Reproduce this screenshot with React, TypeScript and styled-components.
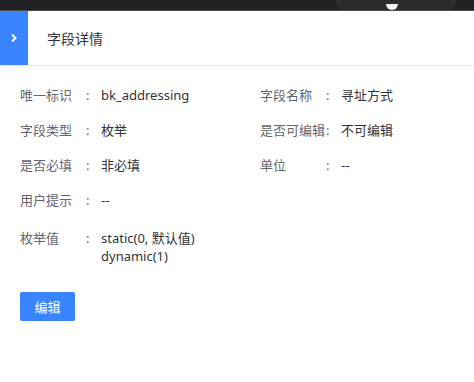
import React from 'react';
import styled, { createGlobalStyle } from 'styled-components';

const GlobalStyle = createGlobalStyle`
  html, body {
    margin: 0;
    padding: 0;
    background: #ffffff;
  }
  body {
    font-family: 'Noto Sans', 'Noto Sans CJK SC', sans-serif;
  }
`;

const Page = styled.div`
  width: 474px;
  height: 382px;
  display: flex;
  flex-direction: column;
  overflow: hidden;
  background: #fff;
`;

const TopStrip = styled.div`
  height: 10px;
  background: #202124;
  border-bottom: 1px solid #4a4b4f;
  display: flex;
  justify-content: flex-end;
  align-items: flex-end;
  padding-right: 18px;
`;

const Pill = styled.div`
  width: 120px;
  height: 10px;
  background: #2b2c30;
  border-radius: 0 0 6px 6px;
  display: flex;
  justify-content: center;
  align-items: flex-end;
  padding-right: 8px;
  box-sizing: border-box;
`;

const Dot = styled.div`
  width: 12px;
  height: 6px;
  border-radius: 0 0 6px 6px;
  background: #f2f2f2;
`;

const Header = styled.div`
  height: 54px;
  display: flex;
  align-items: center;
  border-bottom: 1px solid #e6e7eb;
`;

const Toggle = styled.div`
  width: 28px;
  height: 100%;
  background: #3a84ff;
  display: flex;
  align-items: center;
  justify-content: center;
`;

const Title = styled.div`
  margin-left: 19px;
  font-size: 14px;
  color: #313238;
`;

const Body = styled.div`
  padding: 20px 0 0 20px;
`;

const Grid = styled.div`
  display: grid;
  grid-template-columns: 240px 214px;
  row-gap: 17px;
`;

const Item = styled.div<{ $span?: boolean; $gap?: number }>`
  display: flex;
  font-size: 13px;
  line-height: 18px;
  grid-column: ${p => (p.$span ? '1 / span 2' : 'auto')};
  margin-top: ${p => p.$gap ?? 0}px;
`;

const Label = styled.span`
  width: 66px;
  color: #63656e;
  white-space: nowrap;
`;

const Colon = styled.span`
  width: 15px;
  color: #63656e;
  text-align: left;
`;

const Value = styled.span`
  color: #313238;
  display: flex;
  flex-direction: column;
`;

const EditButton = styled.button`
  margin-top: 27px;
  width: 55px;
  height: 29px;
  border: none;
  border-radius: 2px;
  background: #3a84ff;
  color: #fff;
  font-family: 'Noto Sans', 'Noto Sans CJK SC', sans-serif;
  font-size: 13px;
  cursor: pointer;
`;

const fields: { label: string; value: string[]; span?: boolean; gap?: number }[] = [
  { label: '唯一标识', value: ['bk_addressing'] },
  { label: '字段名称', value: ['寻址方式'] },
  { label: '字段类型', value: ['枚举'] },
  { label: '是否可编辑', value: ['不可编辑'] },
  { label: '是否必填', value: ['非必填'] },
  { label: '单位', value: ['--'] },
  { label: '用户提示', value: ['--'], span: true },
  { label: '枚举值', value: ['static(0, 默认值)', 'dynamic(1)'], span: true, gap: 3 },
];

export default function App() {
  return (
    <Page>
      <GlobalStyle />
      <TopStrip>
        <Pill>
          <Dot />
        </Pill>
      </TopStrip>
      <Header>
        <Toggle>
          <svg width="8" height="10" viewBox="0 0 8 10">
            <polyline points="2,1.5 5.5,5 2,8.5" fill="none" stroke="#fff" strokeWidth="2" />
          </svg>
        </Toggle>
        <Title>字段详情</Title>
      </Header>
      <Body>
        <Grid>
          {fields.map(f => (
            <Item key={f.label} $span={f.span} $gap={f.gap}>
              <Label>{f.label}</Label>
              <Colon>:</Colon>
              <Value>
                {f.value.map(v => (
                  <span key={v}>{v}</span>
                ))}
              </Value>
            </Item>
          ))}
        </Grid>
        <EditButton>编辑</EditButton>
      </Body>
    </Page>
  );
}
